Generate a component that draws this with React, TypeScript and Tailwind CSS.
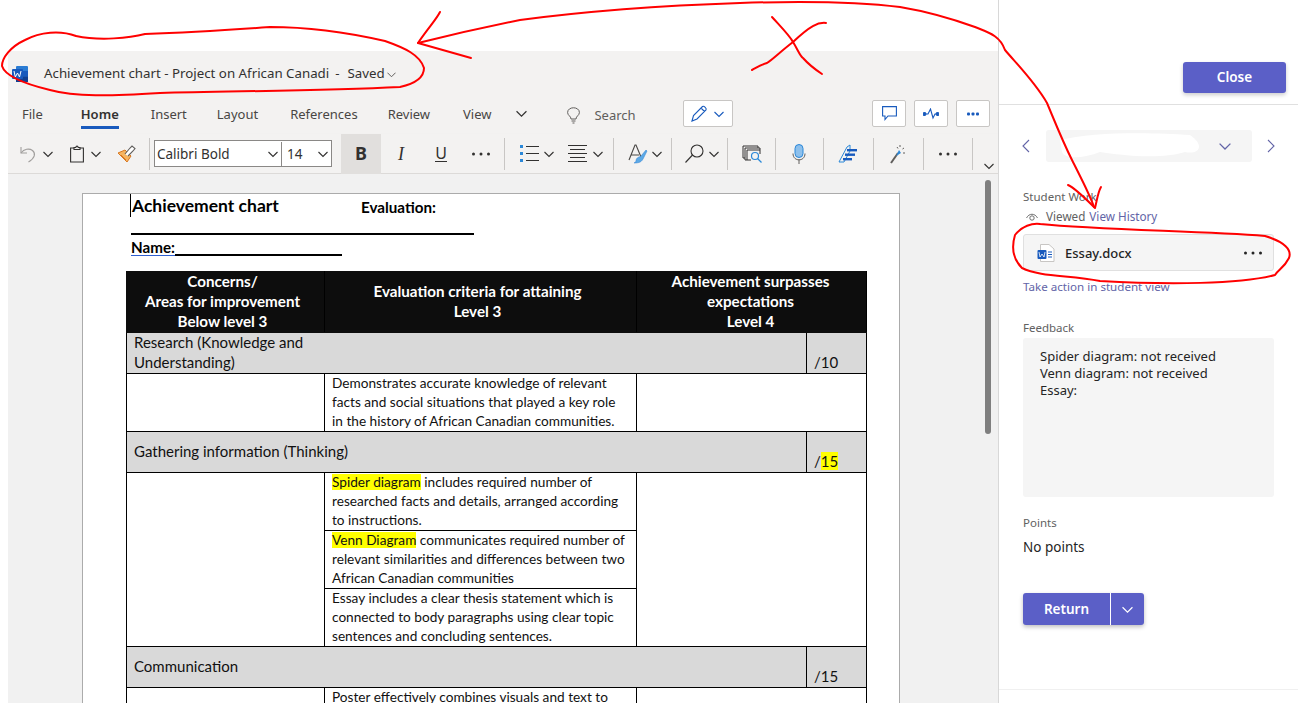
import React from "react";

const ui = { fontFamily: '"Noto Sans", "Open Sans", sans-serif' };
const doc = { fontFamily: 'Lato, "Liberation Sans", sans-serif' };

function Chevron({ className = "", color = "#323130", size = 10 }: { className?: string; color?: string; size?: number }) {
  return (
    <svg className={className} width={size} height={size} viewBox="0 0 10 10" fill="none" stroke={color} strokeWidth="1.1">
      <path d="M0.5 3 L5 7.5 L9.5 3" />
    </svg>
  );
}

function Divider({ left }: { left: number }) {
  return <div className="h-[32px] w-px shrink-0 bg-[#c8c6c4]" style={{ marginLeft: left }} />;
}

function Dots({ color = "#323130" }: { color?: string }) {
  return (
    <svg width="18" height="4" viewBox="0 0 18 4" fill={color}>
      <rect x="0" y="0.5" width="3" height="3" rx="1.5" />
      <rect x="7.5" y="0.5" width="3" height="3" rx="1.5" />
      <rect x="15" y="0.5" width="3" height="3" rx="1.5" />
    </svg>
  );
}

function WordLogo() {
  return (
    <svg width="16" height="16" viewBox="0 0 16 16">
      <rect x="4" y="0" width="12" height="16" rx="1" fill="#2b7cd3" />
      <rect x="4" y="5" width="12" height="5.5" fill="#185abd" />
      <rect x="4" y="10.5" width="12" height="5.5" fill="#103f91" />
      <rect x="0" y="3" width="11" height="10" rx="1" fill="#185abd" />
      <path d="M2 5 L3.3 11 L5.5 7 L7.5 11 L9 5" fill="none" stroke="#fff" strokeWidth="1" />
    </svg>
  );
}

function Tab({ label, left, active }: { label: string; left: number; active?: boolean }) {
  return (
    <div
      className={`relative shrink-0 text-[13px] leading-[18px] ${active ? "font-semibold text-[#323130]" : "text-[#484644]"}`}
      style={{ marginLeft: left }}
    >
      {label}
      {active && <div className="absolute left-0 right-0 top-[21px] h-[3px] bg-[#185abd]" />}
    </div>
  );
}

function IconBox({ children }: { children: React.ReactNode }) {
  return (
    <div className="flex h-[27px] w-[34px] shrink-0 items-center justify-center rounded-[2px] border border-[#c8c6c4] bg-white">
      {children}
    </div>
  );
}

function Toolbar() {
  return (
    <div className="flex h-[40px] items-center border-b border-[#dcdad8] shadow-[0_1px_2px_rgba(0,0,0,0.08)]">
      {/* undo */}
      <svg className="ml-[12px] shrink-0" width="17" height="18" viewBox="0 0 17 18" fill="none" stroke="#a19f9d" strokeWidth="1.1">
        <path d="M1 2 V8 H7" />
        <path d="M1 8 C4 4 9 3 12.5 5.5 C16 8.5 15 13 8.5 17" />
      </svg>
      <Chevron className="ml-[6px] shrink-0" />
      {/* clipboard */}
      <svg className="ml-[17px] shrink-0" width="14" height="18" viewBox="0 0 14 18" fill="none" stroke="#323130" strokeWidth="1.1">
        <path d="M4 3 H0.6 V17 H13.4 V3 H10" />
        <path d="M4 4.5 V2.5 H5.8 C6 0.6 8 0.6 8.2 2.5 H10 V4.5 Z" />
      </svg>
      <Chevron className="ml-[7px] shrink-0" />
      {/* format painter */}
      <svg className="ml-[16px] shrink-0" width="19" height="18" viewBox="0 0 19 18">
        <path d="M1 8 L8 5 L14 11 L10 17 Z" fill="#f5b461" stroke="#d9771f" strokeWidth="1" />
        <path d="M8 9 L13 3 L15 1 L18 3.5 L16 6 L11 11" fill="#fff" stroke="#605e5c" strokeWidth="1.1" />
        <path d="M4 10 L9 15" stroke="#d9771f" strokeWidth="1" />
      </svg>
      <Divider left={13} />
      {/* font name + size */}
      <div className="ml-[4px] flex h-[27px] w-[178px] shrink-0 items-center border border-[#8a8886] bg-white pt-[1px] text-[13.5px] text-[#323130]">
        <div className="flex h-full w-[127px] items-center justify-between border-r border-[#8a8886] pl-[2px] pr-[3px]">
          <span>Calibri Bold</span>
          <Chevron />
        </div>
        <div className="flex h-full flex-1 items-center justify-between pl-[5px] pr-[3px]">
          <span>14</span>
          <Chevron />
        </div>
      </div>
      {/* B I U */}
      <div className="ml-[9px] flex h-[40px] w-[40px] shrink-0 items-center justify-center bg-[#e1dfdd] text-[18px] font-bold text-[#323130]">B</div>
      <div className="ml-[15px] w-[10px] shrink-0 text-center text-[18px] italic leading-none text-[#323130]" style={{ fontFamily: '"Liberation Serif", serif' }}>I</div>
      <div className="ml-[29px] flex h-[20px] w-[12px] shrink-0 flex-col items-center justify-center text-[16px] leading-[16px] text-[#323130]">
        <span>U</span>
        <span className="h-px w-[12px] bg-[#323130]" />
      </div>
      <div className="ml-[25px] shrink-0"><Dots /></div>
      <Divider left={14} />
      {/* bullets */}
      <svg className="ml-[15px] shrink-0" width="19" height="17" viewBox="0 0 19 17">
        <g fill="#2b88d8"><rect x="0" y="0" width="3" height="3" /><rect x="0" y="7" width="3" height="3" /><rect x="0" y="14" width="3" height="3" /></g>
        <g fill="#323130"><rect x="6" y="1" width="13" height="1" /><rect x="6" y="8" width="13" height="1" /><rect x="6" y="15" width="13" height="1" /></g>
      </svg>
      <Chevron className="ml-[5px] shrink-0" />
      {/* align */}
      <svg className="ml-[14px] shrink-0" width="19" height="17" viewBox="0 0 19 17" fill="#323130">
        <rect x="0" y="0" width="19" height="1" /><rect x="2" y="4" width="15" height="1" /><rect x="0" y="8" width="19" height="1" /><rect x="2" y="12" width="15" height="1" /><rect x="0" y="16" width="19" height="1" />
      </svg>
      <Chevron className="ml-[6px] shrink-0" />
      <Divider left={10} />
      {/* font colour */}
      <svg className="ml-[14px] shrink-0" width="20" height="20" viewBox="0 0 20 20">
        <path d="M1 16 L7 1 H8 L13 13 M3.5 11 H11" fill="none" stroke="#484644" strokeWidth="1.1" />
        <path d="M8 17 C8 13 12 13 13 12 L18 6 L19 7 L15 15 C13 19 9 19 6 19 C7 18 8 18 8 17 Z" fill="#5ca9e5" stroke="#2b7cd3" strokeWidth="0.5" />
      </svg>
      <Chevron className="ml-[4px] shrink-0" />
      <Divider left={9} />
      {/* find */}
      <svg className="ml-[13px] shrink-0" width="19" height="19" viewBox="0 0 19 19" fill="none" stroke="#323130" strokeWidth="1.1">
        <circle cx="12" cy="7" r="6" />
        <path d="M7.5 11 L0.5 18.5" />
      </svg>
      <Chevron className="ml-[5px] shrink-0" />
      <Divider left={8} />
      {/* immersive reader */}
      <svg className="ml-[14px] shrink-0" width="20" height="18" viewBox="0 0 20 18" fill="none">
        <path d="M16 3 V1 H1 V13 H3 M18 5 V3 H3 V15 H5 M5 5 H18 V9 M5 5 V15 H9" stroke="#323130" strokeWidth="1" />
        <circle cx="13" cy="11" r="3.5" stroke="#2b88d8" strokeWidth="1.2" />
        <path d="M15.5 13.5 L19.5 17.5" stroke="#2b88d8" strokeWidth="1.2" />
      </svg>
      <Divider left={13} />
      {/* mic */}
      <svg className="ml-[16px] shrink-0" width="14" height="20" viewBox="0 0 14 20" fill="none">
        <rect x="3" y="0.5" width="8" height="13" rx="4" fill="#8dc0ec" stroke="#2b88d8" />
        <path d="M1 9.5 C1 18 13 18 13 9.5" stroke="#605e5c" />
        <path d="M7 15.5 V20" stroke="#605e5c" />
      </svg>
      <Divider left={17} />
      {/* editor */}
      <svg className="ml-[14px] shrink-0" width="20" height="19" viewBox="0 0 20 19">
        <path d="M1 18 L9 3 L12 1 L12 7 L6 18 Z" fill="none" stroke="#2b88d8" strokeWidth="1" />
        <rect x="9" y="5" width="10" height="2.4" fill="#185abd" />
        <rect x="7" y="9.5" width="10" height="2.4" fill="#185abd" />
        <rect x="5" y="14" width="9" height="2.4" fill="#185abd" />
      </svg>
      <Divider left={15} />
      {/* wand */}
      <svg className="ml-[16px] shrink-0" width="16" height="20" viewBox="0 0 16 20" fill="none">
        <path d="M1 19 L8 9" stroke="#605e5c" strokeWidth="2" />
        <path d="M6 12 L9 6 L11 9 Z" fill="#2b88d8" />
        <path d="M10 1 V3 M14 4 L12.5 5 M15 9 H13 M7 3 L8 4.5" stroke="#605e5c" strokeWidth="1" />
      </svg>
      <Divider left={17} />
      <div className="ml-[15px] shrink-0"><Dots /></div>
      <Divider left={15} />
      <Chevron className="ml-[11px] mt-[24px] shrink-0" />
    </div>
  );
}

function Mark({ children }: { children: React.ReactNode }) {
  return <span className="bg-[#ffff00]">{children}</span>;
}

const cell = "border border-black px-[7px] align-top text-[13.65px] leading-[19px] whitespace-nowrap text-[#111]";
const band = "border border-black bg-[#d9d9d9] px-[7px] text-[15px] leading-[20px] text-[#111]";
const head = "border border-[#0d0d0d] border-r-black bg-[#0d0d0d] text-center align-middle text-[15.2px] font-bold leading-[20px] text-white";

function HeadText({ children }: { children: React.ReactNode }) {
  return <div className="-translate-y-px">{children}</div>;
}

function Page() {
  return (
    <div className="ml-[74px] h-[600px] w-[818px] shrink-0 border border-[#ababab] bg-white pl-[44px]" style={doc}>
      <div className="flex h-[23px] items-center pl-[4px]">
        <span className="-ml-[1px] mr-[1px] h-[23px] w-px bg-black" />
        <span className="w-[229px] text-[17.5px] font-bold leading-[23px] text-black">Achievement chart</span>
        <span className="mt-[3px] text-[15.2px] font-bold text-black">Evaluation:</span>
      </div>
      <div className="ml-[4px] mt-[16px] h-[2px] w-[343px] bg-black" />
      <div className="mt-[5px] flex h-[16px] items-end pl-[4px] text-[15.2px] font-bold leading-[16px] text-black">
        <span className="border-b border-[#2f5fd0]">Name:</span>
        <span className="h-[2px] w-[167px] bg-black" />
      </div>
      <table className="-ml-[1px] mt-[15px] w-[740px] table-fixed border-collapse">
        <colgroup>
          <col className="w-[198px]" />
          <col className="w-[312px]" />
          <col className="w-[170px]" />
          <col className="w-[60px]" />
        </colgroup>
        <tbody>
          <tr className="h-[61px]">
            <td className={`${head} pr-[6px]`}><HeadText>Concerns/<br />Areas for improvement<br />Below level 3</HeadText></td>
            <td className={`${head} pr-[6px]`}><HeadText>Evaluation criteria for attaining<br />Level 3</HeadText></td>
            <td className={`${head} pr-[2px]`} colSpan={2}><HeadText>Achievement surpasses<br />expectations<br />Level 4</HeadText></td>
          </tr>
          <tr className="h-[41px]">
            <td className={`${band} align-top`} colSpan={3}><div className="-mt-px">Research (Knowledge and<br />Understanding)</div></td>
            <td className={`${band} pt-[19px] align-top`}>/10</td>
          </tr>
          <tr className="h-[58px]">
            <td className={cell} />
            <td className={cell}>Demonstrates accurate knowledge of relevant<br />facts and social situations that played a key role<br />in the history of African Canadian communities.</td>
            <td className={cell} colSpan={2} />
          </tr>
          <tr className="h-[41px]">
            <td className={`${band} align-middle`} colSpan={3}><div className="-translate-y-px">Gathering information (Thinking)</div></td>
            <td className={`${band} pt-[19px] align-top`}>/<Mark>15</Mark></td>
          </tr>
          <tr className="h-[58px]">
            <td className={cell} rowSpan={3} />
            <td className={cell}><Mark>Spider diagram</Mark> includes required number of<br />researched facts and details, arranged according<br />to instructions.</td>
            <td className={cell} rowSpan={3} colSpan={2} />
          </tr>
          <tr className="h-[58px]">
            <td className={cell}><Mark>Venn Diagram</Mark> communicates required number of<br />relevant similarities and differences between two<br />African Canadian communities</td>
          </tr>
          <tr className="h-[58px]">
            <td className={cell}>Essay includes a clear thesis statement which is<br />connected to body paragraphs using clear topic<br />sentences and concluding sentences.</td>
          </tr>
          <tr className="h-[41px]">
            <td className={`${band} align-middle`} colSpan={3}><div className="-translate-y-px">Communication</div></td>
            <td className={`${band} pt-[19px] align-top`}>/15</td>
          </tr>
          <tr className="h-[58px]">
            <td className={cell} />
            <td className={cell}>Poster effectively combines visuals and text to</td>
            <td className={cell} colSpan={2} />
          </tr>
        </tbody>
      </table>
    </div>
  );
}

function WordFrame() {
  return (
    <div className="ml-[8px] mt-[51px] flex h-[652px] w-[990px] shrink-0 flex-col overflow-hidden bg-[#f3f2f1]" style={ui}>
      {/* title */}
      <div className="flex h-[44px] shrink-0 items-center pl-[4px] pt-[2px]">
        <WordLogo />
        <span className="ml-[16px] text-[13.3px] text-[#323130]">Achievement chart - Project on African Canadi</span>
        <span className="ml-[6px] text-[13.3px] text-[#323130]">-</span>
        <span className="ml-[8px] text-[13.3px] text-[#323130]">Saved</span>
        <Chevron className="ml-[2px]" color="#605e5c" size={9} />
      </div>
      {/* tabs */}
      <div className="flex h-[39px] shrink-0 items-center pb-[2px]">
        <Tab label="File" left={14} />
        <Tab label="Home" left={38} active />
        <Tab label="Insert" left={32} />
        <Tab label="Layout" left={30} />
        <Tab label="References" left={32} />
        <Tab label="Review" left={30} />
        <Tab label="View" left={33} />
        <Chevron className="ml-[25px] shrink-0" size={11} />
        <svg className="ml-[40px] mt-[3px] shrink-0" width="13" height="17" viewBox="0 0 13 17" fill="none" stroke="#605e5c" strokeWidth="1">
          <path d="M4 12 C4 9 0.6 8.5 0.6 5.5 C0.6 -0.8 12.4 -0.8 12.4 5.5 C12.4 8.5 9 9 9 12 Z" />
          <path d="M4.5 14 H8.5 M5.5 16 H7.5" />
        </svg>
        <span className="ml-[14px] mt-[5px] shrink-0 text-[13px] text-[#605e5c]">Search</span>
        <div className="ml-[47px] flex h-[27px] w-[50px] shrink-0 items-center justify-center gap-[6px] rounded-[2px] border border-[#c8c6c4] bg-white">
          <svg width="17" height="17" viewBox="0 0 17 17" fill="none" stroke="#185abd" strokeWidth="1.1">
            <path d="M1 16 L2.5 10.5 L11.5 1.5 C13 0.5 16 3.5 15 5 L6 14 Z M10 3 L13.5 6.5" />
          </svg>
          <Chevron color="#185abd" />
        </div>
        <div className="ml-auto mr-[8px] flex gap-[8px]">
          <IconBox>
            <svg width="15" height="15" viewBox="0 0 15 15" fill="none" stroke="#185abd" strokeWidth="1.1">
              <path d="M0.6 0.6 H14.4 V10 H6 L3 13.5 V10 H0.6 Z" />
            </svg>
          </IconBox>
          <IconBox>
            <svg width="16" height="12" viewBox="0 0 16 12" fill="none" stroke="#185abd" strokeWidth="1.1">
              <path d="M1 6 H5 L7.5 1 L10 10 L12 6 H15" />
              <circle cx="1.5" cy="6" r="1.4" fill="#185abd" />
              <circle cx="14.5" cy="6" r="1.4" fill="#185abd" />
            </svg>
          </IconBox>
          <IconBox>
            <svg width="12" height="4" viewBox="0 0 12 4" fill="#185abd">
              <rect x="0" y="0.5" width="3" height="3" rx="1" />
              <rect x="4.5" y="0.5" width="3" height="3" rx="1" />
              <rect x="9" y="0.5" width="3" height="3" rx="1" />
            </svg>
          </IconBox>
        </div>
      </div>
      <Toolbar />
      {/* doc */}
      <div className="flex flex-1 overflow-hidden bg-[#f1f1f1] pt-[19px]">
        <Page />
        <div className="-mt-[13px] ml-[85px] h-[254px] w-[6px] shrink-0 rounded-full bg-[#7f7f7f]" />
      </div>
    </div>
  );
}

function Label({ children, className = "" }: { children: React.ReactNode; className?: string }) {
  return <div className={`text-[11.5px] leading-[16px] text-[#616161] ${className}`}>{children}</div>;
}

function SidePanel() {
  return (
    <div className="h-[703px] w-[300px] shrink-0 overflow-hidden border-l border-[#d8d8d8] bg-white" style={ui}>
      <div className="mt-[62px] flex h-[43px] items-start justify-end border-b border-[#e0e0e0] pr-[12px]">
        <button className="h-[31px] w-[103px] rounded-[3px] bg-[#5b5fc7] text-[13.5px] font-semibold text-white shadow-[0_2px_4px_rgba(0,0,0,0.2)]">Close</button>
      </div>
      <div className="mt-[25px] flex h-[32px] items-center pl-[22px]">
        <svg width="9" height="14" viewBox="0 0 9 14" fill="none" stroke="#6264a7" strokeWidth="1.1"><path d="M8 1 L2 7 L8 13" /></svg>
        <div className="ml-[16px] flex h-[32px] w-[206px] items-center justify-end rounded-[3px] bg-[#f5f5f5] pr-[21px]">
          <Chevron color="#6264a7" size={12} />
        </div>
        <svg className="ml-[15px]" width="9" height="14" viewBox="0 0 9 14" fill="none" stroke="#6264a7" strokeWidth="1.1"><path d="M1 1 L7 7 L1 13" /></svg>
      </div>
      <div className="ml-[24px] w-[251px]">
        <Label className="mt-[27px]">Student Work</Label>
        <div className="mt-[4px] flex h-[16px] items-center text-[11.7px]">
          <svg className="ml-[3px]" width="12" height="10" viewBox="0 0 12 10" fill="none" stroke="#616161" strokeWidth="0.9">
            <path d="M0.5 6 C3 1 9 1 11.5 6" />
            <circle cx="6" cy="6" r="2.2" />
          </svg>
          <span className="ml-[8px] text-[#616161]">Viewed</span>
          <span className="ml-[4px] text-[#6264a7]">View History</span>
        </div>
        <div className="mt-[9px] flex h-[37px] items-center rounded-[3px] border border-[#e0e0e0] bg-[#f5f5f5] pl-[13px] pr-[11px] pt-[1px]">
          <svg width="18" height="18" viewBox="0 0 18 18">
            <path d="M3.5 0.5 H12 L17 5 V17.5 H3.5 Z" fill="#fff" stroke="#c8c6c4" />
            <rect x="0.5" y="6" width="9" height="9" rx="1" fill="#185abd" />
            <path d="M2 8 L3 13 L5 10 L7 13 L8 8" fill="none" stroke="#fff" strokeWidth="0.8" />
            <path d="M11 8 H15 M11 10.5 H15 M11 13 H15" stroke="#185abd" strokeWidth="1" />
          </svg>
          <span className="ml-[10px] mt-[1px] text-[13px] font-medium text-[#242424]">Essay.docx</span>
          <div className="ml-auto"><Dots color="#242424" /></div>
        </div>
        <div className="mt-[8px] h-[16px] text-[11.6px] leading-[16px] text-[#6264a7]">Take action in student view</div>
        <Label className="mt-[25px]">Feedback</Label>
        <div className="mt-[2px] h-[159px] rounded-[3px] bg-[#f5f5f5] pl-[17px] pt-[10px] text-[13px] leading-[17px] text-[#242424]">
          Spider diagram: not received<br />Venn diagram: not received<br />Essay:
        </div>
        <Label className="mt-[18px]">Points</Label>
        <div className="mt-[7px] text-[13.5px] leading-[18px] text-[#242424]">No points</div>
        <div className="mt-[37px] flex h-[32px] w-[121px] overflow-hidden rounded-[3px] bg-[#5b5fc7] text-white shadow-[0_2px_4px_rgba(0,0,0,0.25)]">
          <div className="flex w-[88px] items-center justify-center border-r border-white text-[13.5px] font-semibold">Return</div>
          <div className="flex flex-1 items-center justify-center"><Chevron color="#fff" size={11} /></div>
        </div>
      </div>
      <div className="mt-[64px] h-px bg-[#f0f0f0]" />
    </div>
  );
}

// red marker scribbles drawn over the screenshot
function Scribbles() {
  const red = { fill: "none", stroke: "#f00", strokeWidth: 2, strokeLinecap: "round" as const, strokeLinejoin: "round" as const };
  return (
    <svg className="pointer-events-none absolute left-0 top-0" width="1298" height="703" viewBox="0 0 1298 703">
      <path d="M1060 140 C1090 132 1150 132 1190 135 C1205 145 1200 155 1185 152 C1160 160 1120 155 1100 152 C1085 158 1065 160 1062 152 Z" fill="#fff" />
      <path {...red} d="M76 36 C60 30 40 32 25 40 C10 47 2 58 2 66 C5 76 25 84 50 90 C75 97 110 96 160 93 C230 91 320 91 400 87 C418 83 424 76 424 68 C420 55 405 48 385 41 C350 33 310 27 270 27 C230 30 180 33 145 34 C130 38 100 41 76 36" />
      <path {...red} d="M440 12 C436 20 428 28 418 43 L471 58" />
      <path {...red} d="M418 43 C450 35 490 26 520 20 C580 12 650 6 740 3 C800 1 860 2 900 7 C930 12 950 18 975 27 C990 33 1000 36 1005 50 C1015 62 1035 82 1047 103 C1055 122 1062 140 1072 160 C1082 180 1090 195 1094 207" />
      <path {...red} d="M1068 185 C1075 188 1085 198 1095 208 C1097 200 1098 192 1101 187" />
      <path {...red} d="M772 17 C782 28 790 36 793 42 C798 50 800 56 803 58 C810 66 816 70 822 74" />
      <path {...red} d="M826 23 C818 22 810 26 793 42 C780 52 772 60 767 63 C760 65 756 68 752 70" />
      <path {...red} d="M1040 224 C1100 230 1200 231 1265 236 C1285 242 1292 250 1289 258 C1284 268 1278 270 1275 275 C1240 284 1170 285 1100 281 C1070 275 1040 277 1022 268 C1012 258 1012 245 1015 235 C1022 226 1032 223 1040 224" />
    </svg>
  );
}

export default function App() {
  return (
    <div className="relative flex h-[703px] w-[1298px] overflow-hidden bg-white">
      <WordFrame />
      <SidePanel />
      <Scribbles />
    </div>
  );
}
